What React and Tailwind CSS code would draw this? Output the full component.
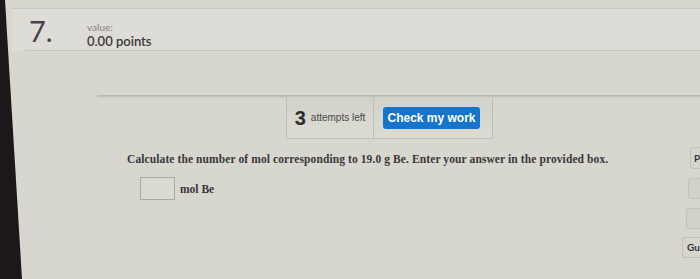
import React from 'react';

const App = () => {
  return (
    <div className="relative w-[700px] h-[279px] overflow-hidden bg-[#d8d7cf] font-['Lato',sans-serif]">
      {/* screen bezel on the left */}
      <div className="absolute inset-y-0 left-0 w-[24px] bg-[#1c1719] [clip-path:polygon(0_0,5px_0,22px_100%,0_100%)]" />

      <div className="pl-[12px]">
        {/* Header: question number + value */}
        <div className="mt-[8px] border-t border-[#c9c8c1] bg-[#dddcd6]">
          <div className="flex items-start h-[42px] ml-[13px] border-b border-[#c4c3bc]">
            <div className="w-[62px] pl-[4px] pt-[8px] text-[29px] leading-[28px] text-[#4b4049]">7.</div>
            <div className="pt-[13px]">
              <div className="text-[10px] leading-[11px] text-[#8a8288]">value:</div>
              <div className="text-[13px] leading-[16px] text-[#3e373c] font-semibold">0.00 points</div>
            </div>
          </div>
        </div>

        {/* Toolbar */}
        <div className="mt-[44px] ml-[85px] h-[3px] bg-gradient-to-b from-[#b2b1aa] to-[#d3d2ca]" />
        <div className="flex">
          <div className="ml-[274px] -mt-[1px] flex h-[42px] w-[207px] border border-t-0 border-[#bebdb6] bg-gradient-to-b from-[#d3d2ca] to-[#dcdbd4]">
            <div className="flex w-[87px] items-center justify-center gap-[5px] border-r border-[#bebdb6]">
              <span className="text-[20px] font-bold leading-none text-[#2e2b2c] font-['Liberation_Sans',sans-serif]">3</span>
              <span className="text-[10px] text-[#4a4748] font-['Liberation_Sans',sans-serif]">attempts left</span>
            </div>
            <div className="flex flex-1 items-center pl-[9px]">
              <button className="h-[22px] w-[97px] rounded-[3px] bg-[#1574cc] text-[12px] font-bold text-white font-['Liberation_Sans',sans-serif]">
                Check my work
              </button>
            </div>
          </div>
        </div>

        {/* Question */}
        <div className="flex">
          <div className="flex-1">
            <p className="mt-[13px] ml-[115px] text-[11.5px] font-bold leading-[14px] text-[#3a3838] font-['Liberation_Serif',serif] tracking-[0.1px]">
              Calculate the number of mol corresponding to 19.0 g Be. Enter your answer in the provided box.
            </p>
            <div className="mt-[11px] ml-[128px] flex items-center gap-[5px]">
              <div className="h-[23px] w-[35px] border border-[#a9a8a2] bg-[#dad9d2]" />
              <span className="pt-[2px] text-[11.5px] font-bold text-[#3a3838] font-['Liberation_Serif',serif]">mol Be</span>
            </div>
          </div>

          {/* Right side buttons (cut off) */}
          <div className="w-[18px] flex flex-col items-start pt-[8px] gap-[9px]">
            <div className="ml-[8px] h-[22px] w-[10px] rounded-l-[3px] border border-r-0 border-[#c2c1ba] bg-[#d6d5ce] pl-[3px] text-[10px] font-bold leading-[20px] text-[#333] overflow-hidden">P</div>
            <div className="ml-[6px] h-[21px] w-[12px] rounded-l-[3px] border border-r-0 border-[#c2c1ba] bg-[#d1d0c9]" />
            <div className="ml-[4px] h-[21px] w-[14px] rounded-l-[3px] border border-r-0 border-[#c2c1ba] bg-[#d1d0c9]" />
            <div className="-mt-[1px] ml-0 h-[21px] w-[18px] rounded-l-[3px] border border-r-0 border-[#c2c1ba] bg-[#d6d5ce] pl-[4px] text-[10px] font-bold leading-[19px] text-[#333] overflow-hidden whitespace-nowrap">Gu</div>
          </div>
        </div>
      </div>
    </div>
  );
};

export default App;
